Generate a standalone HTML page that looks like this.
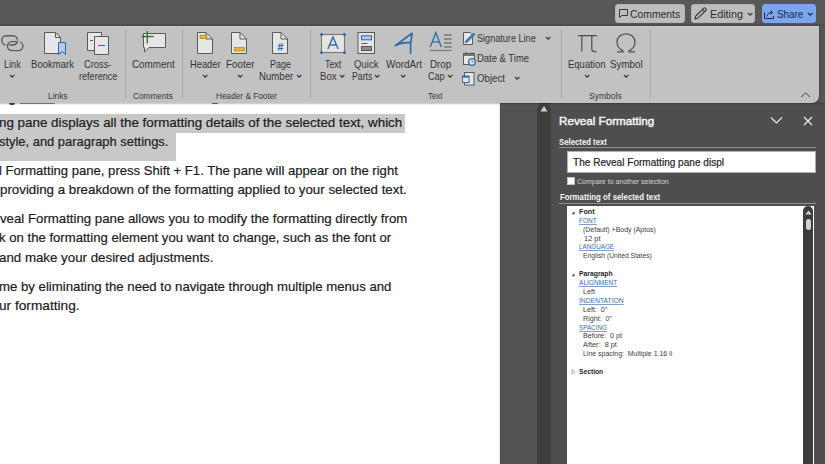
<!DOCTYPE html>
<html><head><meta charset="utf-8">
<style>
*{margin:0;padding:0;box-sizing:border-box}
html,body{width:825px;height:464px;overflow:hidden;background:#575757;font-family:"Liberation Sans",sans-serif}
.a{position:absolute}
svg{position:absolute;overflow:visible}
</style></head><body>
<div class="a" style="left:0;top:0;width:825px;height:26px;background:#585858"></div>
<div class="a" style="left:615px;top:4px;width:69.5px;height:19px;border-radius:3px;background:#bebebe;border:1px solid #b4b4b4"></div>
<div class="a" style="left:690.5px;top:4px;width:64.5px;height:19px;border-radius:3px;background:#bebebe;border:1px solid #b4b4b4"></div>
<div class="a" style="left:761.5px;top:4px;width:54px;height:19px;border-radius:3px;background:#7ba6ef;border:1px solid #7ba6ef"></div>
<div style="position:absolute;top:10.00px;font-size:10px;line-height:10px;color:#2a2a2a;white-space:nowrap;font-weight:400;left:630.30px;transform:scaleX(1.0384);transform-origin:0 0;">Comments</div>
<div style="position:absolute;top:10.00px;font-size:10px;line-height:10px;color:#2a2a2a;white-space:nowrap;font-weight:400;left:709.90px;transform:scaleX(1.0793);transform-origin:0 0;">Editing</div>
<div style="position:absolute;top:10.00px;font-size:10px;line-height:10px;color:#1d2a44;white-space:nowrap;font-weight:400;left:777.30px;transform:scaleX(0.9818);transform-origin:0 0;">Share</div>
<svg style="left:618px;top:9px" width="11" height="10"><path d="M1.5 0.5 H9.5 V6.5 H4 L1.5 8.5 V0.5 Z" fill="none" stroke="#383838" stroke-width="1"/></svg>
<svg style="left:694px;top:7px" width="14" height="13"><path d="M1 12 L1.8 9 L9.5 1.3 A1.3 1.3 0 0 1 11.7 3.5 L4 11.2 Z M8.3 2.5 L10.5 4.7" fill="none" stroke="#383838" stroke-width="1.1" stroke-linejoin="round"/></svg>
<svg style="position:absolute;left:746.50px;top:11.90px" width="6.40" height="4.20"><path d="M1 1 L3.20 3.20 L5.40 1" fill="none" stroke="#383838" stroke-width="1.15"/></svg>
<svg style="left:764px;top:9px" width="11" height="10"><path d="M0.5 3.5 V9.5 H9.5 V7 M3 7.5 C3 5 5 3.5 8 3.5 M6.5 1.5 L8.5 3.5 L6.5 5.5" fill="none" stroke="#1d2a44" stroke-width="1"/></svg>
<svg style="position:absolute;left:806.80px;top:11.90px" width="6.40" height="4.20"><path d="M1 1 L3.20 3.20 L5.40 1" fill="none" stroke="#1d2a44" stroke-width="1.15"/></svg>
<div class="a" style="left:0;top:24px;width:825px;height:1.5px;background:#4f4f4f"></div>
<div class="a" style="left:-10px;top:25.5px;width:829px;height:77px;background:#c2c2c2;border-top:1px solid #cccccc;border-radius:0 0 7px 7px;box-shadow:0 1px 3px rgba(0,0,0,.45)"></div>
<div style="position:absolute;top:60.00px;font-size:10.2px;line-height:10.2px;color:#353535;white-space:nowrap;font-weight:400;left:3.70px;transform:scaleX(0.8936);transform-origin:0 0;">Link</div>
<div style="position:absolute;top:60.00px;font-size:10.2px;line-height:10.2px;color:#353535;white-space:nowrap;font-weight:400;left:31.30px;transform:scaleX(0.9398);transform-origin:0 0;">Bookmark</div>
<div style="position:absolute;top:60.00px;font-size:10.2px;line-height:10.2px;color:#353535;white-space:nowrap;font-weight:400;left:84.20px;transform:scaleX(0.9135);transform-origin:0 0;">Cross-</div>
<div style="position:absolute;top:60.00px;font-size:10.2px;line-height:10.2px;color:#353535;white-space:nowrap;font-weight:400;left:131.90px;transform:scaleX(0.9670);transform-origin:0 0;">Comment</div>
<div style="position:absolute;top:60.00px;font-size:10.2px;line-height:10.2px;color:#353535;white-space:nowrap;font-weight:400;left:190.00px;transform:scaleX(0.9158);transform-origin:0 0;">Header</div>
<div style="position:absolute;top:60.00px;font-size:10.2px;line-height:10.2px;color:#353535;white-space:nowrap;font-weight:400;left:225.90px;transform:scaleX(0.9646);transform-origin:0 0;">Footer</div>
<div style="position:absolute;top:60.00px;font-size:10.2px;line-height:10.2px;color:#353535;white-space:nowrap;font-weight:400;left:270.20px;transform:scaleX(0.8784);transform-origin:0 0;">Page</div>
<div style="position:absolute;top:60.00px;font-size:10.2px;line-height:10.2px;color:#353535;white-space:nowrap;font-weight:400;left:324.50px;transform:scaleX(0.8671);transform-origin:0 0;">Text</div>
<div style="position:absolute;top:60.00px;font-size:10.2px;line-height:10.2px;color:#353535;white-space:nowrap;font-weight:400;left:353.70px;transform:scaleX(0.9408);transform-origin:0 0;">Quick</div>
<div style="position:absolute;top:60.00px;font-size:10.2px;line-height:10.2px;color:#353535;white-space:nowrap;font-weight:400;left:385.70px;transform:scaleX(0.9711);transform-origin:0 0;">WordArt</div>
<div style="position:absolute;top:60.00px;font-size:10.2px;line-height:10.2px;color:#353535;white-space:nowrap;font-weight:400;left:430.30px;transform:scaleX(0.9646);transform-origin:0 0;">Drop</div>
<div style="position:absolute;top:60.00px;font-size:10.2px;line-height:10.2px;color:#353535;white-space:nowrap;font-weight:400;left:568.40px;transform:scaleX(0.9324);transform-origin:0 0;">Equation</div>
<div style="position:absolute;top:60.00px;font-size:10.2px;line-height:10.2px;color:#353535;white-space:nowrap;font-weight:400;left:610.30px;transform:scaleX(0.9626);transform-origin:0 0;">Symbol</div>
<div style="position:absolute;top:72.00px;font-size:10.2px;line-height:10.2px;color:#353535;white-space:nowrap;font-weight:400;left:79.10px;transform:scaleX(0.8922);transform-origin:0 0;">reference</div>
<div style="position:absolute;top:72.00px;font-size:10.2px;line-height:10.2px;color:#353535;white-space:nowrap;font-weight:400;left:259.10px;transform:scaleX(0.9466);transform-origin:0 0;">Number</div>
<div style="position:absolute;top:72.00px;font-size:10.2px;line-height:10.2px;color:#353535;white-space:nowrap;font-weight:400;left:320.30px;transform:scaleX(0.9399);transform-origin:0 0;">Box</div>
<div style="position:absolute;top:72.00px;font-size:10.2px;line-height:10.2px;color:#353535;white-space:nowrap;font-weight:400;left:351.80px;transform:scaleX(0.8580);transform-origin:0 0;">Parts</div>
<div style="position:absolute;top:72.00px;font-size:10.2px;line-height:10.2px;color:#353535;white-space:nowrap;font-weight:400;left:428.20px;transform:scaleX(0.8882);transform-origin:0 0;">Cap</div>
<svg style="position:absolute;left:295.50px;top:73.80px" width="6.40" height="4.20"><path d="M1 1 L3.20 3.20 L5.40 1" fill="none" stroke="#353535" stroke-width="1.15"/></svg>
<svg style="position:absolute;left:338.60px;top:73.80px" width="6.40" height="4.20"><path d="M1 1 L3.20 3.20 L5.40 1" fill="none" stroke="#353535" stroke-width="1.15"/></svg>
<svg style="position:absolute;left:374.30px;top:73.80px" width="6.40" height="4.20"><path d="M1 1 L3.20 3.20 L5.40 1" fill="none" stroke="#353535" stroke-width="1.15"/></svg>
<svg style="position:absolute;left:447.30px;top:73.80px" width="6.40" height="4.20"><path d="M1 1 L3.20 3.20 L5.40 1" fill="none" stroke="#353535" stroke-width="1.15"/></svg>
<svg style="position:absolute;left:8.80px;top:73.80px" width="6.40" height="4.20"><path d="M1 1 L3.20 3.20 L5.40 1" fill="none" stroke="#353535" stroke-width="1.15"/></svg>
<svg style="position:absolute;left:202.10px;top:73.80px" width="6.40" height="4.20"><path d="M1 1 L3.20 3.20 L5.40 1" fill="none" stroke="#353535" stroke-width="1.15"/></svg>
<svg style="position:absolute;left:236.80px;top:73.80px" width="6.40" height="4.20"><path d="M1 1 L3.20 3.20 L5.40 1" fill="none" stroke="#353535" stroke-width="1.15"/></svg>
<svg style="position:absolute;left:400.10px;top:73.80px" width="6.40" height="4.20"><path d="M1 1 L3.20 3.20 L5.40 1" fill="none" stroke="#353535" stroke-width="1.15"/></svg>
<svg style="position:absolute;left:583.80px;top:73.80px" width="6.40" height="4.20"><path d="M1 1 L3.20 3.20 L5.40 1" fill="none" stroke="#353535" stroke-width="1.15"/></svg>
<svg style="position:absolute;left:623.40px;top:73.80px" width="6.40" height="4.20"><path d="M1 1 L3.20 3.20 L5.40 1" fill="none" stroke="#353535" stroke-width="1.15"/></svg>
<div style="position:absolute;top:92.00px;font-size:9.2px;line-height:9.2px;color:#383838;white-space:nowrap;font-weight:400;left:47.50px;transform:scaleX(0.9092);transform-origin:0 0;">Links</div>
<div style="position:absolute;top:92.00px;font-size:9.2px;line-height:9.2px;color:#383838;white-space:nowrap;font-weight:400;left:133.40px;transform:scaleX(0.8983);transform-origin:0 0;">Comments</div>
<div style="position:absolute;top:92.00px;font-size:9.2px;line-height:9.2px;color:#383838;white-space:nowrap;font-weight:400;left:215.70px;transform:scaleX(0.8996);transform-origin:0 0;">Header &amp; Footer</div>
<div style="position:absolute;top:92.00px;font-size:9.2px;line-height:9.2px;color:#383838;white-space:nowrap;font-weight:400;left:428.40px;transform:scaleX(0.8606);transform-origin:0 0;">Text</div>
<div style="position:absolute;top:92.00px;font-size:9.2px;line-height:9.2px;color:#383838;white-space:nowrap;font-weight:400;left:588.90px;transform:scaleX(0.9282);transform-origin:0 0;">Symbols</div>
<div style="position:absolute;top:34.00px;font-size:10.2px;line-height:10.2px;color:#353535;white-space:nowrap;font-weight:400;left:477.40px;transform:scaleX(0.8934);transform-origin:0 0;">Signature Line</div>
<div style="position:absolute;top:54.00px;font-size:10.2px;line-height:10.2px;color:#353535;white-space:nowrap;font-weight:400;left:477.40px;transform:scaleX(0.9283);transform-origin:0 0;">Date &amp; Time</div>
<div style="position:absolute;top:74.00px;font-size:10.2px;line-height:10.2px;color:#353535;white-space:nowrap;font-weight:400;left:477.40px;transform:scaleX(0.9476);transform-origin:0 0;">Object</div>
<svg style="position:absolute;left:544.60px;top:35.90px" width="6.40" height="4.20"><path d="M1 1 L3.20 3.20 L5.40 1" fill="none" stroke="#353535" stroke-width="1.15"/></svg>
<svg style="position:absolute;left:513.60px;top:76.40px" width="6.40" height="4.20"><path d="M1 1 L3.20 3.20 L5.40 1" fill="none" stroke="#353535" stroke-width="1.15"/></svg>
<div class="a" style="left:125px;top:30px;width:1px;height:68px;background:#a6a6a6"></div>
<div class="a" style="left:182px;top:30px;width:1px;height:68px;background:#a6a6a6"></div>
<div class="a" style="left:310px;top:30px;width:1px;height:68px;background:#a6a6a6"></div>
<div class="a" style="left:561px;top:30px;width:1px;height:68px;background:#a6a6a6"></div>
<div class="a" style="left:650px;top:30px;width:1px;height:68px;background:#a6a6a6"></div>
<svg style="left:800px;top:92px" width="11" height="6"><path d="M1 5 L5.5 1 L10 5" fill="none" stroke="#444" stroke-width="1"/></svg>
<svg style="left:0px;top:34px" width="25" height="18"><rect x="1.8" y="1.7" width="15.7" height="9.3" rx="4.65" fill="none" stroke="#5c5c5c" stroke-width="1.4"/><path d="M5.5 10.5 L9 12.5" stroke="#c2c2c2" stroke-width="2.2"/><rect x="7.4" y="7.6" width="15.5" height="9" rx="4.5" fill="none" stroke="#5c5c5c" stroke-width="1.4"/><path d="M16.5 6.5 L19.5 8.5" stroke="#c2c2c2" stroke-width="2.2"/><path d="M15.8 10 A4.65 4.65 0 0 0 17.5 6.4" fill="none" stroke="#5c5c5c" stroke-width="1.4"/></svg>
<svg style="left:43px;top:31px" width="25" height="26"><path d="M1.5 1.5 H12.5 L17.5 6.5 V22.5 H1.5 Z" fill="#e6e6e6" stroke="#5a5a5a" stroke-width="1"/><path d="M12.5 1.5 V6.5 H17.5" fill="none" stroke="#5a5a5a" stroke-width="1"/><path d="M15.5 11.5 H22.5 V23.5 L19 20.5 L15.5 23.5 Z" fill="#a9cdf0" stroke="#2f6aa8" stroke-width="1"/></svg>
<svg style="left:86px;top:31px" width="25" height="25"><path d="M1.5 1.5 H15.5 V19.5 H1.5 Z" fill="#e6e6e6" stroke="#5a5a5a" stroke-width="1"/><path d="M8.5 5.5 H22.5 V23.5 H8.5 Z" fill="#e6e6e6" stroke="#5a5a5a" stroke-width="1"/><path d="M4 9.5 H7 M12 14.5 H19" stroke="#c0392b" stroke-width="1.2"/></svg>
<svg style="left:140px;top:29px" width="28" height="25"><path d="M3.5 4.5 H25.5 V18.5 H9 L4.5 23 V18.5 H3.5 Z" fill="#e6e6e6" stroke="#5a5a5a" stroke-width="1"/><path d="M7.3 2 V14.5 M1.5 7.5 H13.5" stroke="#2e7d32" stroke-width="1.4"/></svg>
<svg style="left:196px;top:31px" width="19" height="24"><path d="M1.5 1.5 H10 L16.5 8 V22.5 H1.5 Z" fill="#e6e6e6" stroke="#5a5a5a" stroke-width="1"/><path d="M10 1.5 V8 H16.5" fill="none" stroke="#5a5a5a" stroke-width="1"/><rect x="4" y="4.2" width="6.8" height="3.4" fill="#e8b530" stroke="#9a7412" stroke-width=".6"/></svg>
<svg style="left:230px;top:31px" width="19" height="24"><path d="M1.5 1.5 H10 L16.5 8 V22.5 H1.5 Z" fill="#e6e6e6" stroke="#5a5a5a" stroke-width="1"/><path d="M10 1.5 V8 H16.5" fill="none" stroke="#5a5a5a" stroke-width="1"/><rect x="4.6" y="16.6" width="9.8" height="3.4" fill="#e8b530" stroke="#9a7412" stroke-width=".6"/></svg>
<svg style="left:271px;top:31px" width="19" height="24"><path d="M1.5 1.5 H10 L16.5 8 V22.5 H1.5 Z" fill="#e6e6e6" stroke="#5a5a5a" stroke-width="1"/><path d="M10 1.5 V8 H16.5" fill="none" stroke="#5a5a5a" stroke-width="1"/><text x="9.4" y="20" font-size="10.5" font-weight="700" fill="#2f6aa8" text-anchor="middle" font-family="Liberation Sans">#</text></svg>
<svg style="left:320px;top:33px" width="26" height="21"><rect x="1.5" y="1.5" width="23" height="18" fill="#e4e4e4" stroke="#777" stroke-width="1.1"/><path d="M7.8 16 L13 4 L18.2 16 M9.6 12 H16.4" fill="none" stroke="#2f6aa8" stroke-width="1.4"/><circle cx="1.5" cy="1.5" r="1.5" fill="#2f6aa8"/><circle cx="24.5" cy="1.5" r="1.5" fill="#2f6aa8"/><circle cx="1.5" cy="19.5" r="1.5" fill="#2f6aa8"/><circle cx="24.5" cy="19.5" r="1.5" fill="#2f6aa8"/></svg>
<svg style="left:357px;top:32px" width="19" height="23"><rect x="1" y="0.5" width="16.5" height="21" fill="#e4e4e4" stroke="#5a5a5a" stroke-width="1"/><rect x="4.5" y="3.8" width="10" height="4" fill="#a9cdf0" stroke="#2f6aa8" stroke-width="1"/><path d="M4.5 11.5 H10.5" stroke="#5a5a5a" stroke-width="1"/><rect x="4.5" y="14.5" width="10" height="4" fill="#8c8c8c" stroke="#555" stroke-width="1"/></svg>
<svg style="left:394px;top:32px" width="20" height="23"><path d="M1.2 13.6 L18 1.3 M18 1.3 C16.8 8 16.2 15 16.6 21.3 M1.5 13.6 C6 11 11 10.3 16.4 10.3" fill="none" stroke="#2f6aa8" stroke-width="1.7" stroke-linecap="round"/></svg>
<svg style="left:429px;top:31px" width="25" height="22"><path d="M1.3 16 L6.8 1.5 L12.3 16 M3.3 10.8 H10.3" fill="none" stroke="#2f6aa8" stroke-width="1.3"/><path d="M15 4 H22.7 M15 8 H22.7 M15 12 H22.7 M15 16 H22.7" stroke="#7a7a7a" stroke-width="1.3"/><path d="M1 19.5 H22.7" stroke="#7a7a7a" stroke-width="1.2"/></svg>
<svg style="left:462px;top:31px" width="14" height="15"><path d="M1.5 1.5 H8 L10.5 4 V13.5 H1.5 Z" fill="#e6e6e6" stroke="#5a5a5a" stroke-width="1"/><path d="M3.2 12 L4 9.5 L11.5 2 L13 3.5 L5.5 11 Z" fill="#3b78c0" stroke="#2f6aa8" stroke-width=".7"/></svg>
<svg style="left:462px;top:51px" width="15" height="15"><rect x="1.5" y="2.5" width="11" height="11" fill="#e6e6e6" stroke="#5a5a5a" stroke-width="1"/><path d="M1.5 4 H12.5" stroke="#5a5a5a" stroke-width="1.6"/><path d="M4 1 V3 M10 1 V3" stroke="#5a5a5a" stroke-width="1"/><circle cx="10" cy="11" r="3.3" fill="#e6e6e6" stroke="#2f6aa8" stroke-width="1.3"/><path d="M10 9.4 V11 H11.3" fill="none" stroke="#2f6aa8" stroke-width=".8"/></svg>
<svg style="left:461px;top:72px" width="14" height="14"><rect x="3.5" y="0.5" width="9.5" height="12.5" fill="#e6e6e6" stroke="#5a5a5a" stroke-width="1"/><rect x="1.5" y="4" width="6.5" height="6.5" fill="#e6e6e6" stroke="#2f6aa8" stroke-width="1"/><path d="M1.5 4.8 H8" stroke="#2f6aa8" stroke-width="1.6"/></svg>
<svg style="left:576px;top:33px" width="23" height="21"><path d="M2 3.2 Q2.5 2.6 3.8 2.6 H20.8 M5.8 2.6 V18.6 M15.8 2.6 V16 Q15.8 18.6 18.5 18.6 H20.4" fill="none" stroke="#4e4e4e" stroke-width="1.2"/></svg>
<svg style="left:615px;top:32px" width="22" height="22"><path d="M2 19.8 H8 V18.8 C4.5 17 2 14 2 10.2 C2 5.5 5.5 1.8 11 1.8 C16.5 1.8 20 5.5 20 10.2 C20 14 17.5 17 14 18.8 V19.8 H20" fill="none" stroke="#4e4e4e" stroke-width="1.2"/></svg>
<div class="a" style="left:0;top:103px;width:500px;height:361px;background:#fff;overflow:hidden">
<div class="a" style="left:0;top:11.3px;width:404.7px;height:18.5px;background:#c8c8c8"></div>
<div class="a" style="left:0;top:29.7px;width:175.8px;height:28.8px;background:#c8c8c8"></div>
<div style="position:absolute;left:-1.00px;top:12.86px;font-size:13.4px;line-height:13.4px;color:#1c1c1c;-webkit-text-stroke:0.2px #1c1c1c;white-space:pre;transform-origin:0 0;transform:scaleX(0.9995)">ng pane displays all the formatting details of the selected text, which</div>
<div style="position:absolute;left:-0.96px;top:32.06px;font-size:13.4px;line-height:13.4px;color:#1c1c1c;-webkit-text-stroke:0.2px #1c1c1c;white-space:pre;transform-origin:0 0;transform:scaleX(0.9644)">style, and paragraph settings.</div>
<div style="position:absolute;left:-0.98px;top:60.86px;font-size:13.4px;line-height:13.4px;color:#1c1c1c;-webkit-text-stroke:0.2px #1c1c1c;white-space:pre;transform-origin:0 0;transform:scaleX(0.9774)">l Formatting pane, press Shift + F1. The pane will appear on the right</div>
<div style="position:absolute;left:0.21px;top:79.96px;font-size:13.4px;line-height:13.4px;color:#1c1c1c;-webkit-text-stroke:0.2px #1c1c1c;white-space:pre;transform-origin:0 0;transform:scaleX(0.9936)">providing a breakdown of the formatting applied to your selected text.</div>
<div style="position:absolute;left:0.00px;top:108.66px;font-size:13.4px;line-height:13.4px;color:#1c1c1c;-webkit-text-stroke:0.2px #1c1c1c;white-space:pre;transform-origin:0 0;transform:scaleX(0.9879)">veal Formatting pane allows you to modify the formatting directly from</div>
<div style="position:absolute;left:-0.98px;top:128.16px;font-size:13.4px;line-height:13.4px;color:#1c1c1c;-webkit-text-stroke:0.2px #1c1c1c;white-space:pre;transform-origin:0 0;transform:scaleX(0.9810)">k on the formatting element you want to change, such as the font or</div>
<div style="position:absolute;left:-1.10px;top:147.66px;font-size:13.4px;line-height:13.4px;color:#1c1c1c;-webkit-text-stroke:0.2px #1c1c1c;white-space:pre;transform-origin:0 0;transform:scaleX(0.9935)">and make your desired adjustments.</div>
<div style="position:absolute;left:-0.99px;top:176.96px;font-size:13.4px;line-height:13.4px;color:#1c1c1c;-webkit-text-stroke:0.2px #1c1c1c;white-space:pre;transform-origin:0 0;transform:scaleX(0.9854)">me by eliminating the need to navigate through multiple menus and</div>
<div style="position:absolute;left:-1.02px;top:196.16px;font-size:13.4px;line-height:13.4px;color:#1c1c1c;-webkit-text-stroke:0.2px #1c1c1c;white-space:pre;transform-origin:0 0;transform:scaleX(1.0208)">ur formatting.</div>
</div>
<div class="a" style="left:500px;top:103px;width:37px;height:361px;background:#535351;border-left:1.5px solid #4a4a4a"></div>
<div class="a" style="left:497px;top:103px;width:3px;height:361px;background:linear-gradient(90deg,rgba(0,0,0,0),rgba(0,0,0,.06))"></div>
<div class="a" style="left:537px;top:103px;width:14px;height:361px;background:#3e3e3e;border-radius:7px 7px 0 0"></div>
<svg style="left:540px;top:105px" width="8" height="8"><path d="M0.5 6.5 L4 1 L7.5 6.5 Z" fill="#d0d0d0"/></svg>
<div class="a" style="left:551px;top:103px;width:274px;height:361px;background:#4e4e4e"></div>
<div class="a" style="left:0;top:103px;width:825px;height:2px;background:linear-gradient(rgba(0,0,0,.25),rgba(0,0,0,0))"></div>
<div class="a" style="left:20px;top:102.8px;width:35px;height:1.3px;background:#5877a8"></div>
<div class="a" style="left:9px;top:102.5px;width:6px;height:2px;border-radius:0 0 3px 3px;background:#2c4650"></div>
<div class="a" style="left:212px;top:102.8px;width:6px;height:1.6px;border-radius:0 0 3px 3px;background:#3b5a78"></div>
<div style="position:absolute;top:116.00px;font-size:11.2px;line-height:11.2px;color:#f4f4f4;white-space:nowrap;font-weight:400;left:558.50px;transform:scaleX(1.0427);transform-origin:0 0;-webkit-text-stroke:0.45px #f4f4f4;">Reveal Formatting</div>
<svg style="left:770px;top:116px" width="13" height="9"><path d="M1 1.5 L6.5 7 L12 1.5" fill="none" stroke="#f0f0f0" stroke-width="1.1"/></svg>
<svg style="left:803px;top:115.5px" width="10" height="10"><path d="M1 1 L9 9 M9 1 L1 9" fill="none" stroke="#f0f0f0" stroke-width="1.1"/></svg>
<div style="position:absolute;top:138.00px;font-size:8.8px;line-height:8.8px;color:#f4f4f4;white-space:nowrap;font-weight:700;left:558.90px;transform:scaleX(0.8826);transform-origin:0 0;">Selected text</div>
<div class="a" style="left:559px;top:146.7px;width:257px;height:1px;background:#8f8f8f"></div>
<div class="a" style="left:567px;top:150.5px;width:249px;height:22px;background:#fff;border:1px solid #b0b0b0"></div>
<div style="position:absolute;top:158.00px;font-size:10px;line-height:10px;color:#1f1f1f;white-space:nowrap;font-weight:400;left:572.60px;transform:scaleX(1.0061);transform-origin:0 0;-webkit-text-stroke:0.2px #1f1f1f;">The Reveal Formatting pane displ</div>
<div class="a" style="left:567.4px;top:177.3px;width:7.7px;height:7.7px;background:#fbfbfb;border:1px solid #c0c0c0"></div>
<div style="position:absolute;top:178.00px;font-size:7.6px;line-height:7.6px;color:#d4d4d4;white-space:nowrap;font-weight:400;left:577.40px;transform:scaleX(0.9205);transform-origin:0 0;">Compare to another selection</div>
<div style="position:absolute;top:193.00px;font-size:8.8px;line-height:8.8px;color:#f4f4f4;white-space:nowrap;font-weight:700;left:559.50px;transform:scaleX(0.8904);transform-origin:0 0;">Formatting of selected text</div>
<div class="a" style="left:559px;top:202.7px;width:257px;height:1px;background:#8f8f8f"></div>
<div class="a" style="left:567px;top:205.5px;width:247px;height:270px;background:#fff"></div>
<div class="a" style="left:802.7px;top:206px;width:10.8px;height:270px;background:#3c3c3c;border-radius:5.4px 5.4px 0 0"></div>
<svg style="left:805px;top:210px" width="7" height="5"><path d="M0.3 4.5 L3.5 0.5 L6.7 4.5 Z" fill="#d2d2d2"/></svg>
<div class="a" style="left:805.5px;top:218.7px;width:5.5px;height:11.8px;background:#d2d2d2;border-radius:2.75px"></div>
<div style="position:absolute;top:209.00px;font-size:6.9px;line-height:6.9px;color:#262626;white-space:nowrap;font-weight:700;left:578.50px;transform:scaleX(1.0454);transform-origin:0 0;">Font</div>
<svg style="left:570.5px;top:210.6px" width="4" height="4"><path d="M3.5 0.3 V3.3 H0.5 Z" fill="#444"/></svg>
<div style="position:absolute;top:218.00px;font-size:6.9px;line-height:6.9px;color:#3d6cb0;white-space:nowrap;font-weight:400;left:578.50px;transform:scaleX(0.9491);transform-origin:0 0;text-decoration:underline;text-decoration-color:#7f9fcc;">FONT</div>
<div style="position:absolute;top:227.00px;font-size:6.9px;line-height:6.9px;color:#3d3d3d;white-space:nowrap;font-weight:400;left:583.10px;transform:scaleX(1.0084);transform-origin:0 0;">(Default) +Body (Aptos)</div>
<div style="position:absolute;top:236.00px;font-size:6.9px;line-height:6.9px;color:#3d3d3d;white-space:nowrap;font-weight:400;left:584.10px;transform:scaleX(1.0766);transform-origin:0 0;">12 pt</div>
<div style="position:absolute;top:244.00px;font-size:6.9px;line-height:6.9px;color:#3d6cb0;white-space:nowrap;font-weight:400;left:578.50px;transform:scaleX(0.9140);transform-origin:0 0;text-decoration:underline;text-decoration-color:#7f9fcc;">LANGUAGE</div>
<div style="position:absolute;top:253.00px;font-size:6.9px;line-height:6.9px;color:#3d3d3d;white-space:nowrap;font-weight:400;left:583.40px;transform:scaleX(0.9763);transform-origin:0 0;">English (United States)</div>
<div style="position:absolute;top:271.00px;font-size:6.9px;line-height:6.9px;color:#262626;white-space:nowrap;font-weight:700;left:578.50px;transform:scaleX(0.9858);transform-origin:0 0;">Paragraph</div>
<svg style="left:570.5px;top:272.9px" width="4" height="4"><path d="M3.5 0.3 V3.3 H0.5 Z" fill="#444"/></svg>
<div style="position:absolute;top:280.00px;font-size:6.9px;line-height:6.9px;color:#3d6cb0;white-space:nowrap;font-weight:400;left:578.50px;transform:scaleX(0.9527);transform-origin:0 0;text-decoration:underline;text-decoration-color:#7f9fcc;">ALIGNMENT</div>
<div style="position:absolute;top:289.00px;font-size:6.9px;line-height:6.9px;color:#3d3d3d;white-space:nowrap;font-weight:400;left:583.30px;transform:scaleX(1.0528);transform-origin:0 0;">Left</div>
<div style="position:absolute;top:298.00px;font-size:6.9px;line-height:6.9px;color:#3d6cb0;white-space:nowrap;font-weight:400;left:578.50px;transform:scaleX(0.9764);transform-origin:0 0;text-decoration:underline;text-decoration-color:#7f9fcc;">INDENTATION</div>
<div style="position:absolute;top:307.00px;font-size:6.9px;line-height:6.9px;color:#3d3d3d;white-space:nowrap;font-weight:400;left:583.30px;transform:scaleX(1.0291);transform-origin:0 0;">Left:&nbsp; 0"</div>
<div style="position:absolute;top:316.00px;font-size:6.9px;line-height:6.9px;color:#3d3d3d;white-space:nowrap;font-weight:400;left:583.30px;transform:scaleX(1.0353);transform-origin:0 0;">Right:&nbsp; 0"</div>
<div style="position:absolute;top:325.00px;font-size:6.9px;line-height:6.9px;color:#3d6cb0;white-space:nowrap;font-weight:400;left:578.50px;transform:scaleX(0.9114);transform-origin:0 0;text-decoration:underline;text-decoration-color:#7f9fcc;">SPACING</div>
<div style="position:absolute;top:333.00px;font-size:6.9px;line-height:6.9px;color:#3d3d3d;white-space:nowrap;font-weight:400;left:583.30px;transform:scaleX(1.0389);transform-origin:0 0;">Before:&nbsp; 0 pt</div>
<div style="position:absolute;top:342.00px;font-size:6.9px;line-height:6.9px;color:#3d3d3d;white-space:nowrap;font-weight:400;left:583.30px;transform:scaleX(1.0664);transform-origin:0 0;">After:&nbsp; 8 pt</div>
<div style="position:absolute;top:351.00px;font-size:6.9px;line-height:6.9px;color:#3d3d3d;white-space:nowrap;font-weight:400;left:583.30px;transform:scaleX(1.0081);transform-origin:0 0;">Line spacing:&nbsp; Multiple 1.16 li</div>
<div style="position:absolute;top:369.00px;font-size:6.9px;line-height:6.9px;color:#262626;white-space:nowrap;font-weight:700;left:578.50px;transform:scaleX(0.9724);transform-origin:0 0;">Section</div>
<svg style="left:570.5px;top:369.0px" width="5" height="6"><path d="M1 0.5 L4 2.8 L1 5 Z" fill="none" stroke="#999" stroke-width=".8"/></svg>
</body></html>
